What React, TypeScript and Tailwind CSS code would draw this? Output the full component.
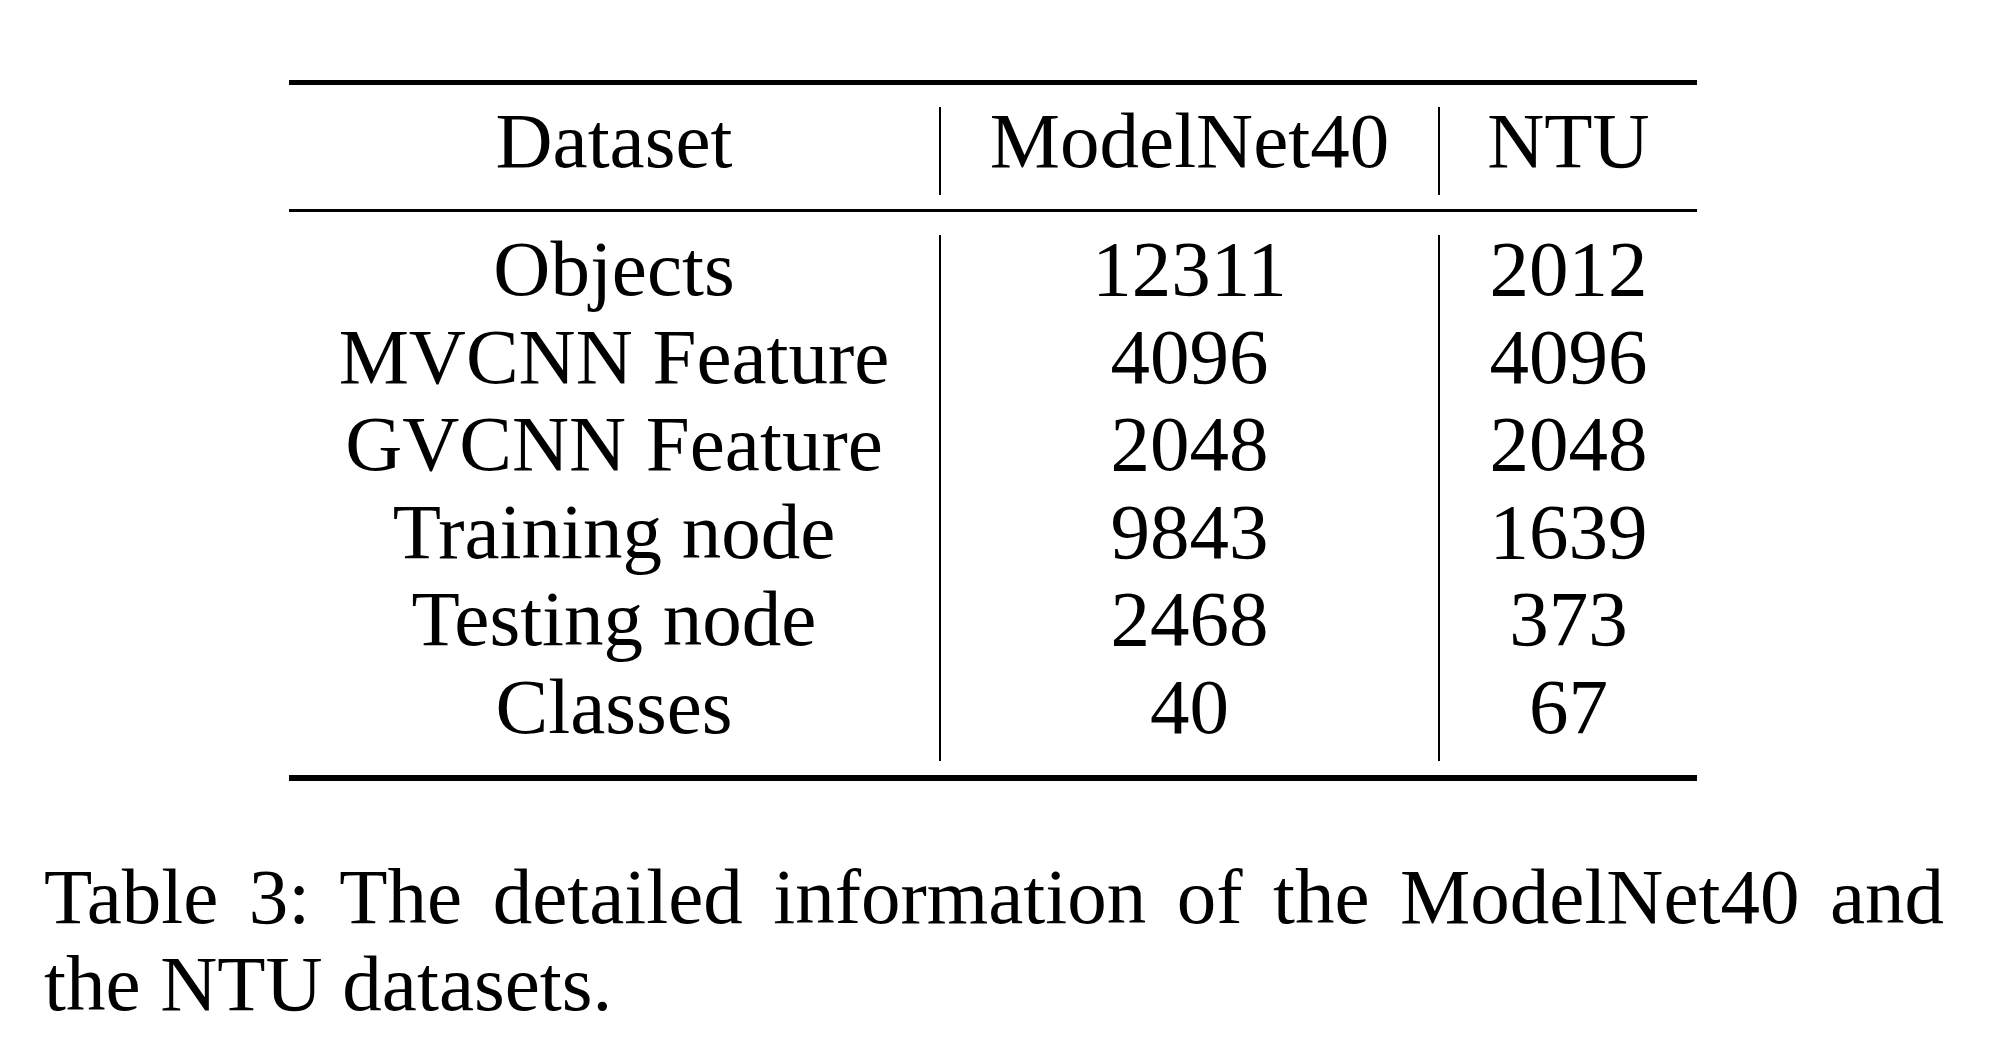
const rows = [
  ["Objects", "12311", "2012"],
  ["MVCNN Feature", "4096", "4096"],
  ["GVCNN Feature", "2048", "2048"],
  ["Training node", "9843", "1639"],
  ["Testing node", "2468", "373"],
  ["Classes", "40", "67"],
];

function Row({ cells }: { cells: string[] }) {
  // each row is one strut tall: baseline sits 0.7 of the row below its top
  return (
    <div className="grid grid-cols-[650px_499px_259px] h-[87.6px] leading-[68.65px]">
      <div className="text-center">{cells[0]}</div>
      <div className="text-center border-l-2 border-black">{cells[1]}</div>
      <div className="text-center border-l-2 border-black">{cells[2]}</div>
    </div>
  );
}

export default function App() {
  return (
    <div
      className="w-full h-[1051px] bg-white text-black text-[79px] overflow-hidden"
      style={{ fontFamily: '"Liberation Serif", "Times New Roman", serif' }}
    >
      {/* Table */}
      <div className="pt-[80px] pl-[289px]">
        <div className="w-[1408px] flex flex-col">
          <div className="h-[5px] bg-black" />
          <div className="mt-[22px]">
            <Row cells={["Dataset", "ModelNet40", "NTU"]} />
          </div>
          <div className="mt-[14.4px] h-[3px] bg-black" />
          <div className="mt-[23px] flex flex-col">
            {rows.map((r) => (
              <Row key={r[0]} cells={r} />
            ))}
          </div>
          <div className="mt-[14.4px] h-[6px] bg-black" />
        </div>
      </div>

      {/* Caption */}
      <p className="mt-[72px] ml-[44px] w-[1900px] text-justify leading-[87px]">
        Table 3: The detailed information of the ModelNet40 and the NTU datasets.
      </p>
    </div>
  );
}
